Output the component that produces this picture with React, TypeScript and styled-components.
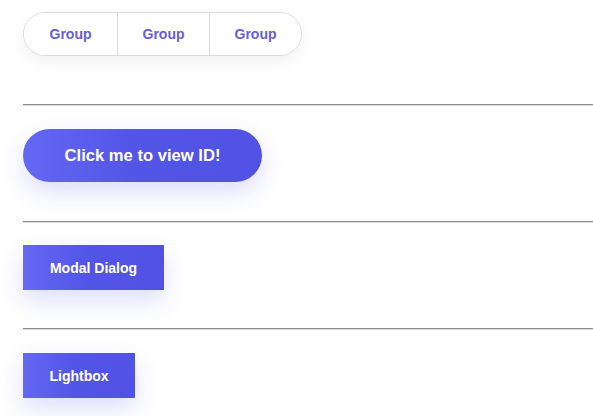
import styled, { createGlobalStyle } from 'styled-components';

const GlobalStyle = createGlobalStyle`
  html, body {
    margin: 0;
    padding: 0;
    background: #ffffff;
    font-family: 'Liberation Sans', Arial, sans-serif;
    overflow: hidden;
  }
`;

export const Page = styled.div`
  padding-left: 23px;
  width: 580px;
`;

export const Section = styled.div<{ $top: number; $bottom: number }>`
  padding-top: ${(p) => p.$top}px;
  padding-bottom: ${(p) => p.$bottom}px;
  display: flex;
  align-items: flex-start;
`;

export const Divider = styled.hr`
  margin: 0;
  height: 0;
  border: none;
  border-top: 1px solid #8c8c8c;
  border-bottom: 1px solid #dcdcdc;
`;

export const ButtonGroup = styled.div`
  display: flex;
  height: 44px;
  box-sizing: border-box;
  border: 1px solid #dcdcdc;
  border-radius: 22px;
  overflow: hidden;
  box-shadow: 0 6px 16px rgba(0, 0, 0, 0.06);
  background: #fff;
`;

export const GroupItem = styled.button`
  border: none;
  border-left: 1px solid #dcdcdc;
  background: #fff;
  width: 92px;
  padding: 0;
  font-family: 'Liberation Sans', Arial, sans-serif;
  font-size: 14px;
  font-weight: bold;
  color: #6660d8;
  cursor: pointer;

  &:first-child {
    border-left: none;
    width: 93px;
  }
`;

export const Primary = styled.button<{ $pill?: boolean; $w: number }>`
  border: none;
  color: #fff;
  font-family: 'Liberation Sans', Arial, sans-serif;
  font-weight: bold;
  cursor: pointer;
  background: linear-gradient(90deg, #6568f3 0%, #5355e6 45%, #5152e4 100%);
  box-shadow: 0 10px 24px rgba(99, 102, 241, 0.22);
  width: ${(p) => p.$w}px;
  padding: 0;
  height: ${(p) => (p.$pill ? 53 : 45)}px;
  border-radius: ${(p) => (p.$pill ? '27px' : '0')};
  font-size: ${(p) => (p.$pill ? 16.6 : 14)}px;
`;

export default function App() {
  return (
    <>
      <GlobalStyle />
      <Page>
        <Section $top={12} $bottom={48}>
          <ButtonGroup>
            <GroupItem>Group</GroupItem>
            <GroupItem>Group</GroupItem>
            <GroupItem>Group</GroupItem>
          </ButtonGroup>
        </Section>
        <Divider />
        <Section $top={23} $bottom={39}>
          <Primary $pill $w={239}>Click me to view ID!</Primary>
        </Section>
        <Divider />
        <Section $top={22} $bottom={38}>
          <Primary $w={141}>Modal Dialog</Primary>
        </Section>
        <Divider />
        <Section $top={23} $bottom={20}>
          <Primary $w={112}>Lightbox</Primary>
        </Section>
      </Page>
    </>
  );
}
